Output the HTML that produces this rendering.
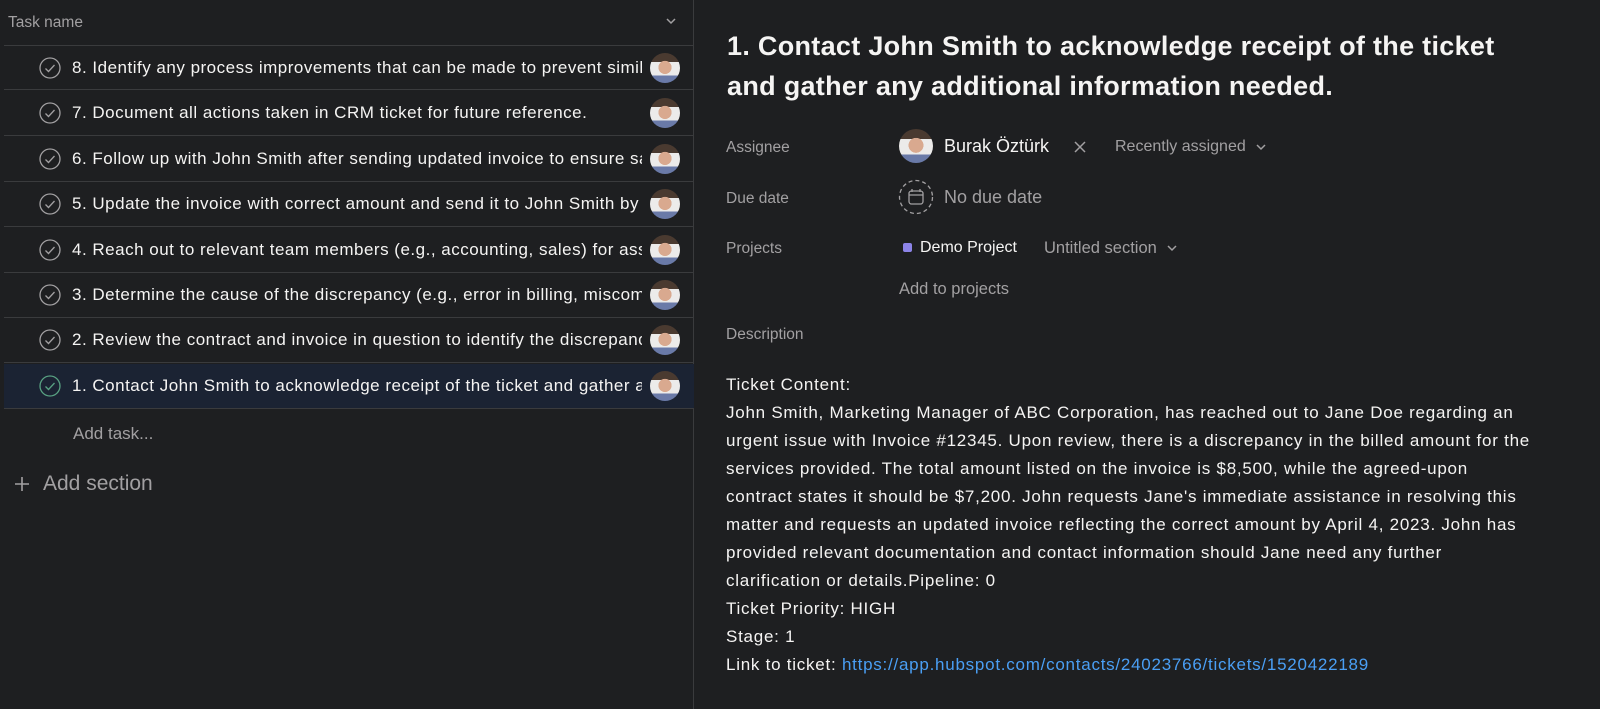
<!DOCTYPE html>
<html><head><meta charset="utf-8"><style>
*{margin:0;padding:0;box-sizing:border-box}
body{width:1600px;height:709px;background:#1e1f21;font-family:"Liberation Sans",sans-serif;color:#f5f4f3;overflow:hidden;position:relative}
#left{position:absolute;left:0;top:0;width:694px;height:709px;border-right:1px solid #3a3b3d}
.hdr{position:absolute;left:8px;top:14px;font-size:15.5px;color:#a2a0a2}
.chev{position:absolute;left:664px;top:14px}
.row{position:absolute;left:4px;width:690px;height:45px;border-top:1px solid #3a3b3d;border-bottom:1px solid #3a3b3d}
.row .t{position:absolute;left:68px;top:12px;font-size:17px;letter-spacing:0.5px;white-space:nowrap;width:570px;overflow:hidden}
.row svg.ck{position:absolute;left:35px;top:11px}
.av{position:absolute;width:30px;height:30px;border-radius:50%;background:radial-gradient(circle at 50% 48%,#d9a98f 0 30%,transparent 31%),linear-gradient(#4a3a30 0 30%,#ecebea 30% 75%,#6a7aa8 75%);}
.row .av{left:646px;top:7px}
.sel{background:#1b2333}
.title{position:absolute;left:727px;top:26px;width:860px;font-size:27px;font-weight:bold;line-height:40px;letter-spacing:0.3px;color:#f5f4f3;white-space:nowrap}
.lab{position:absolute;left:726px;font-size:15.5px;color:#a2a0a2}
.val{position:absolute;white-space:nowrap}
.desc{position:absolute;left:726px;top:371px;font-size:17px;letter-spacing:0.75px;line-height:28px;width:870px;color:#f5f4f3;white-space:nowrap}
.desc a{color:#4a9ff5;text-decoration:none}
</style></head><body>
<div id="left">
<div class="hdr">Task name</div>
<svg class="chev" width="14" height="14" viewBox="0 0 14 14"><path d="M3 5l4 4 4-4" stroke="#a2a0a2" stroke-width="1.5" fill="none"/></svg>
</div>
<div class="row" style="top:45px"><svg class="ck" width="22" height="22" viewBox="0 0 22 22"><circle cx="11" cy="11" r="10" stroke="#a2a0a2" stroke-width="1.3" fill="none"/><path d="M6.5 11.5l3 3 6-6.5" stroke="#a2a0a2" stroke-width="1.3" fill="none"/></svg><div class="t">8. Identify any process improvements that can be made to prevent similar issues</div><div class="av"></div></div>
<div class="row" style="top:91px;border-top:none"><svg class="ck" width="22" height="22" viewBox="0 0 22 22"><circle cx="11" cy="11" r="10" stroke="#a2a0a2" stroke-width="1.3" fill="none"/><path d="M6.5 11.5l3 3 6-6.5" stroke="#a2a0a2" stroke-width="1.3" fill="none"/></svg><div class="t">7. Document all actions taken in CRM ticket for future reference.</div><div class="av"></div></div>
<div class="row" style="top:137px;border-top:none"><svg class="ck" width="22" height="22" viewBox="0 0 22 22"><circle cx="11" cy="11" r="10" stroke="#a2a0a2" stroke-width="1.3" fill="none"/><path d="M6.5 11.5l3 3 6-6.5" stroke="#a2a0a2" stroke-width="1.3" fill="none"/></svg><div class="t">6. Follow up with John Smith after sending updated invoice to ensure satisfaction</div><div class="av"></div></div>
<div class="row" style="top:182px;border-top:none"><svg class="ck" width="22" height="22" viewBox="0 0 22 22"><circle cx="11" cy="11" r="10" stroke="#a2a0a2" stroke-width="1.3" fill="none"/><path d="M6.5 11.5l3 3 6-6.5" stroke="#a2a0a2" stroke-width="1.3" fill="none"/></svg><div class="t">5. Update the invoice with correct amount and send it to John Smith by April 4</div><div class="av"></div></div>
<div class="row" style="top:228px;border-top:none"><svg class="ck" width="22" height="22" viewBox="0 0 22 22"><circle cx="11" cy="11" r="10" stroke="#a2a0a2" stroke-width="1.3" fill="none"/><path d="M6.5 11.5l3 3 6-6.5" stroke="#a2a0a2" stroke-width="1.3" fill="none"/></svg><div class="t">4. Reach out to relevant team members (e.g., accounting, sales) for assistance</div><div class="av"></div></div>
<div class="row" style="top:273px;border-top:none"><svg class="ck" width="22" height="22" viewBox="0 0 22 22"><circle cx="11" cy="11" r="10" stroke="#a2a0a2" stroke-width="1.3" fill="none"/><path d="M6.5 11.5l3 3 6-6.5" stroke="#a2a0a2" stroke-width="1.3" fill="none"/></svg><div class="t">3. Determine the cause of the discrepancy (e.g., error in billing, miscommunication)</div><div class="av"></div></div>
<div class="row" style="top:318px;border-top:none"><svg class="ck" width="22" height="22" viewBox="0 0 22 22"><circle cx="11" cy="11" r="10" stroke="#a2a0a2" stroke-width="1.3" fill="none"/><path d="M6.5 11.5l3 3 6-6.5" stroke="#a2a0a2" stroke-width="1.3" fill="none"/></svg><div class="t">2. Review the contract and invoice in question to identify the discrepancy</div><div class="av"></div></div>
<div class="row sel" style="top:364px;border-top:none"><svg class="ck" width="22" height="22" viewBox="0 0 22 22"><circle cx="11" cy="11" r="10" stroke="#58a182" stroke-width="1.3" fill="none"/><path d="M6.5 11.5l3 3 6-6.5" stroke="#58a182" stroke-width="1.3" fill="none"/></svg><div class="t">1. Contact John Smith to acknowledge receipt of the ticket and gather any additional</div><div class="av"></div></div>
<div style="position:absolute;left:73px;top:424px;font-size:17px;color:#a2a0a2">Add task...</div>
<svg style="position:absolute;left:13px;top:475px" width="18" height="18" viewBox="0 0 18 18"><path d="M9 2v14M2 9h14" stroke="#a2a0a2" stroke-width="1.6"/></svg>
<div style="position:absolute;left:43px;top:472px;font-size:21px;color:#a2a0a2">Add section</div>

<div class="title">1. Contact John Smith to acknowledge receipt of the ticket<br>and gather any additional information needed.</div>
<div class="lab" style="top:139px">Assignee</div>
<div class="av" style="left:899px;top:129px;width:34px;height:34px"></div>
<div class="val" style="left:944px;top:136px;font-size:18px">Burak Öztürk</div>
<svg style="position:absolute;left:1073px;top:140px" width="14" height="14" viewBox="0 0 14 14"><path d="M2 2l10 10M12 2L2 12" stroke="#a2a0a2" stroke-width="1.5"/></svg>
<div class="val" style="left:1115px;top:138px;font-size:16px;color:#a2a0a2">Recently assigned</div>
<svg style="position:absolute;left:1254px;top:140px" width="14" height="14" viewBox="0 0 14 14"><path d="M3 5l4 4 4-4" stroke="#a2a0a2" stroke-width="1.5" fill="none"/></svg>
<div class="lab" style="top:190px">Due date</div>
<svg style="position:absolute;left:898px;top:179px" width="36" height="36" viewBox="0 0 36 36"><circle cx="18" cy="18" r="16.5" stroke="#a2a0a2" stroke-width="1.3" fill="none" stroke-dasharray="4 3"/><rect x="11" y="12" width="14" height="13" rx="2.5" stroke="#a2a0a2" stroke-width="1.3" fill="none"/><path d="M11 16h14M14 10v3M22 10v3" stroke="#a2a0a2" stroke-width="1.3"/></svg>
<div class="val" style="left:944px;top:187px;font-size:18px;color:#a2a0a2">No due date</div>
<div class="lab" style="top:240px">Projects</div>
<div style="position:absolute;left:903px;top:243px;width:9px;height:9px;border-radius:2px;background:#8d84e8"></div>
<div class="val" style="left:920px;top:239px;font-size:16px">Demo Project</div>
<div class="val" style="left:1044px;top:239px;font-size:16.5px;color:#a2a0a2">Untitled section</div>
<svg style="position:absolute;left:1165px;top:241px" width="14" height="14" viewBox="0 0 14 14"><path d="M3 5l4 4 4-4" stroke="#a2a0a2" stroke-width="1.5" fill="none"/></svg>
<div class="val" style="left:899px;top:280px;font-size:16.5px;color:#a2a0a2">Add to projects</div>
<div class="lab" style="top:326px">Description</div>
<div class="desc">Ticket Content:<br>John Smith, Marketing Manager of ABC Corporation, has reached out to Jane Doe regarding an<br>urgent issue with Invoice #12345. Upon review, there is a discrepancy in the billed amount for the<br>services provided. The total amount listed on the invoice is $8,500, while the agreed-upon<br>contract states it should be $7,200. John requests Jane's immediate assistance in resolving this<br>matter and requests an updated invoice reflecting the correct amount by April 4, 2023. John has<br>provided relevant documentation and contact information should Jane need any further<br>clarification or details.Pipeline: 0<br>Ticket Priority: HIGH<br>Stage: 1<br>Link to ticket: <a>https://app.hubspot.com/contacts/24023766/tickets/1520422189</a></div>
</body></html>
